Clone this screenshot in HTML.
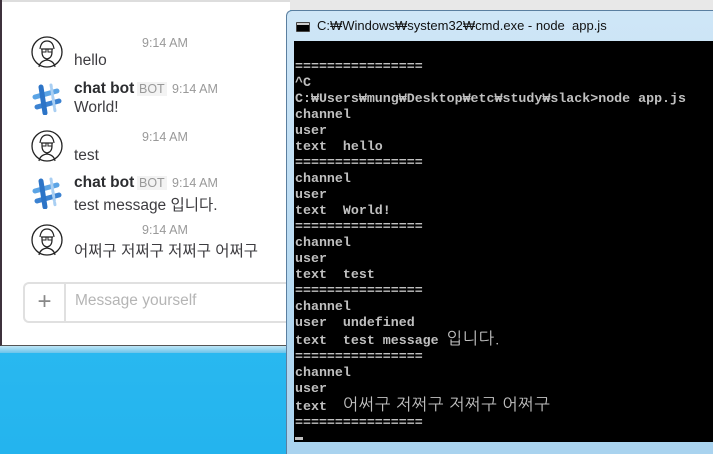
<!DOCTYPE html>
<html><head><meta charset="utf-8"><style>
*{margin:0;padding:0;box-sizing:border-box}
html,body{width:713px;height:454px;overflow:hidden}
body{position:relative;background:linear-gradient(180deg,#3ac5f5 0%,#24b4ee 100%);font-family:"Liberation Sans","Noto Sans CJK KR",sans-serif}
.slack{position:absolute;left:0;top:0;width:290px;height:346px;background:#fff;border-left:2px solid #3e313c;border-bottom:1px solid #555}
.bar{position:absolute;left:0;top:346px;width:290px;height:7px;background:linear-gradient(#bfe6f7,#6bc4ea);}
.top{position:absolute;left:0;top:0;width:290px;height:2px;background:#ddd}
.ts{position:absolute;font-size:12.5px;color:#999}
.msg{position:absolute;left:72px;font-size:15.5px;color:#3d3c40}
.name{position:absolute;left:72px;font-size:15.5px;font-weight:bold;color:#2c2d30}
.bot{position:absolute;font-size:12.5px;color:#999;background:#f3f3f3;padding:0 2px}
.av{position:absolute;left:29px;width:32px;height:32px}
.input{position:absolute;left:21px;top:282px;width:270px;height:41px;border:2px solid #e0e0e0;border-radius:6px;border-right:none}
.plus{position:absolute;left:0;top:0;width:41px;height:37px;border-right:2px solid #e0e0e0;color:#888;font-size:24px;text-align:center;line-height:35px}
.ph{position:absolute;left:50px;top:8px;font-size:15.5px;color:#b5b5b5}
.cmd{position:absolute;left:286px;top:10px;width:430px;height:444px;background:linear-gradient(#cfe6f7,#a9d3ef);border:1px solid #5a7fa0;border-right:none;border-bottom:none;border-radius:6px 0 0 0}
.title{position:absolute;left:30px;top:7px;font-size:13px;color:#111}
.con{position:absolute;left:294px;top:41px;width:419px;height:401px;background:#000;overflow:hidden}
pre{position:absolute;left:1px;top:18px;font-family:"Liberation Mono","NanumGothic",monospace;font-weight:bold;font-size:13.3px;line-height:16px;color:#c0c0c0}
.k{font-family:"NanumGothic","Noto Sans CJK KR",sans-serif;font-weight:normal;font-size:16.5px;line-height:16px;letter-spacing:0.5px}
</style></head><body>
<div class="slack">
<div class="top"></div>
<svg class="av" style="top:36px" viewBox="0 0 32 32"><circle cx="16" cy="16" r="15" fill="#fff" stroke="#222" stroke-width="1.3"/><path d="M9 13 Q10 5 16 5 Q22 5 23 13 M10 13h12 M11 13 v3 q0 6 5 7 q5-1 5-7v-3 M8 31 q1-6 8-7 q7 1 8 7" fill="none" stroke="#222" stroke-width="1.2"/><rect x="11" y="13" width="4" height="3" fill="none" stroke="#222"/><rect x="17" y="13" width="4" height="3" fill="none" stroke="#222"/></svg>
<div class="ts" style="left:140px;top:36px">9:14 AM</div>
<div class="msg" style="top:52px">hello</div>
<svg class="av" style="top:83px" viewBox="0 0 32 32"><g stroke-linecap="round" stroke-width="5"><line x1="4" y1="14" x2="26" y2="8" stroke="#5ba4e5"/><line x1="6" y1="24" x2="28" y2="18" stroke="#3b82d1"/><line x1="10" y1="4" x2="14" y2="30" stroke="#2c74c7"/><line x1="20" y1="2" x2="24" y2="28" stroke="#a9cff3" stroke-dasharray="2 2" stroke-width="3"/></g></svg>
<div class="name" style="top:80px">chat bot</div><div class="bot" style="left:135px;top:82px">BOT</div><div class="ts" style="left:170px;top:82px">9:14 AM</div>
<div class="msg" style="top:99px">World!</div>
<svg class="av" style="top:130px" viewBox="0 0 32 32"><circle cx="16" cy="16" r="15" fill="#fff" stroke="#222" stroke-width="1.3"/><path d="M9 13 Q10 5 16 5 Q22 5 23 13 M10 13h12 M11 13 v3 q0 6 5 7 q5-1 5-7v-3 M8 31 q1-6 8-7 q7 1 8 7" fill="none" stroke="#222" stroke-width="1.2"/><rect x="11" y="13" width="4" height="3" fill="none" stroke="#222"/><rect x="17" y="13" width="4" height="3" fill="none" stroke="#222"/></svg>
<div class="ts" style="left:140px;top:130px">9:14 AM</div>
<div class="msg" style="top:147px">test</div>
<svg class="av" style="top:177px" viewBox="0 0 32 32"><g stroke-linecap="round" stroke-width="5"><line x1="4" y1="14" x2="26" y2="8" stroke="#5ba4e5"/><line x1="6" y1="24" x2="28" y2="18" stroke="#3b82d1"/><line x1="10" y1="4" x2="14" y2="30" stroke="#2c74c7"/><line x1="20" y1="2" x2="24" y2="28" stroke="#a9cff3" stroke-dasharray="2 2" stroke-width="3"/></g></svg>
<div class="name" style="top:174px">chat bot</div><div class="bot" style="left:135px;top:176px">BOT</div><div class="ts" style="left:170px;top:176px">9:14 AM</div>
<div class="msg" style="top:193px">test message 입니다.</div>
<svg class="av" style="top:224px" viewBox="0 0 32 32"><circle cx="16" cy="16" r="15" fill="#fff" stroke="#222" stroke-width="1.3"/><path d="M9 13 Q10 5 16 5 Q22 5 23 13 M10 13h12 M11 13 v3 q0 6 5 7 q5-1 5-7v-3 M8 31 q1-6 8-7 q7 1 8 7" fill="none" stroke="#222" stroke-width="1.2"/><rect x="11" y="13" width="4" height="3" fill="none" stroke="#222"/><rect x="17" y="13" width="4" height="3" fill="none" stroke="#222"/></svg>
<div class="ts" style="left:140px;top:223px">9:14 AM</div>
<div class="msg" style="top:239px">어쩌구 저쩌구 저쩌구 어쩌구</div>
<div class="input"><div class="plus">+</div><div class="ph">Message yourself</div></div>
</div>
<div class="bar"></div>
<div style="position:absolute;left:290px;top:0;width:423px;height:10px;background:#e8e8e8"></div>
<div class="cmd"><svg style="position:absolute;left:9px;top:11px" width="14" height="10"><rect width="14" height="10" fill="#000" stroke="#888"/><rect x="1" y="1" width="12" height="2" fill="#ccc"/></svg><div class="title">C:₩Windows₩system32₩cmd.exe - node &nbsp;app.js</div></div>
<div class="con"><pre>================
^C
C:₩Users₩mung₩Desktop₩etc₩study₩slack&gt;node app.js
channel
user
text  hello
================
channel
user
text  World!
================
channel
user
text  test
================
channel
user  undefined
text  test message <span class="k">입니다.</span>
================
channel
user
text  <span class="k">어써구 저쩌구 저쩌구 어쩌구</span>
================</pre>
<div style="position:absolute;left:1px;top:396px;width:8px;height:3px;background:#c0c0c0"></div></div>
</body></html>
